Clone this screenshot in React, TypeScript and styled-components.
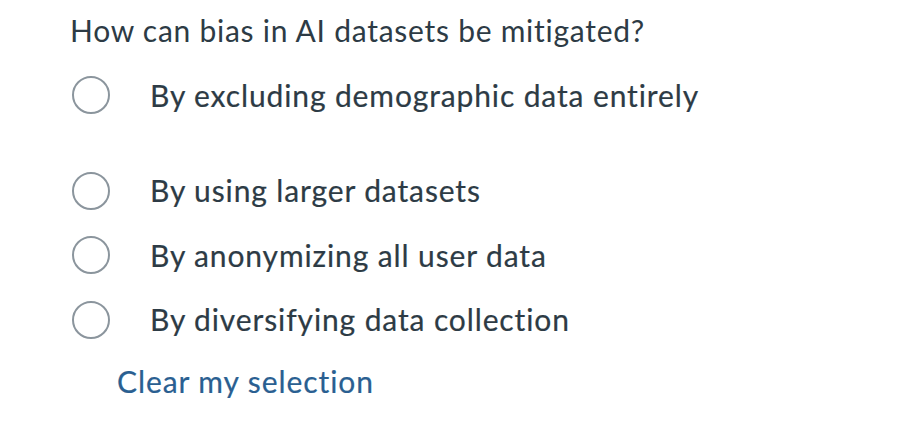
import React from "react";
import styled, { createGlobalStyle } from "styled-components";

const Global = createGlobalStyle`
  html, body { margin: 0; padding: 0; background: #ffffff; }
  body { font-family: Lato, "Open Sans", sans-serif; color: #2d3b45; }
`;

const Page = styled.div`
  display: flex;
  flex-direction: column;
  padding: 8px 0 0 70px;
`;

const Question = styled.div`
  font-size: 30px;
  line-height: 45px;
  letter-spacing: 0.74px;
  margin-bottom: 10px;
`;

const Options = styled.div`
  display: flex;
  flex-direction: column;
`;

const Row = styled.label<{ $extra?: number }>`
  display: flex;
  align-items: center;
  gap: 40px;
  height: 64.5px;
  padding-left: 2px;
  margin-bottom: ${(p) => p.$extra ?? 0}px;
  font-size: 30px;
  cursor: pointer;
`;

const Radio = styled.span`
  box-sizing: border-box;
  width: 38px;
  height: 38px;
  flex: none;
  border-radius: 50%;
  border: 2.5px solid #8b959d;
  background: #ffffff;
`;

const Label = styled.span`
  font-size: 30px;
  line-height: 45px;
  letter-spacing: 0.88px;
  color: #2d3b45;
  -webkit-text-stroke: 0.2px #2d3b45;
`;

const Clear = styled.a`
  margin: 7px 0 0 47px;
  font-size: 30px;
  line-height: 45px;
  letter-spacing: 0.92px;
  color: #2a5f91;
  -webkit-text-stroke: 0.2px #2a5f91;
  text-decoration: none;
  cursor: pointer;
  align-self: flex-start;
`;

const options = [
  "By excluding demographic data entirely",
  "By using larger datasets",
  "By anonymizing all user data",
  "By diversifying data collection",
];

export default function App() {
  return (
    <>
      <Global />
      <Page>
        <Question>How can bias in AI datasets be mitigated?</Question>
        <Options>
          {options.map((o, i) => (
            <Row key={o} $extra={i === 0 ? 31 : 0}>
              <Radio />
              <Label>{o}</Label>
            </Row>
          ))}
        </Options>
        <Clear>Clear my selection</Clear>
      </Page>
    </>
  );
}
